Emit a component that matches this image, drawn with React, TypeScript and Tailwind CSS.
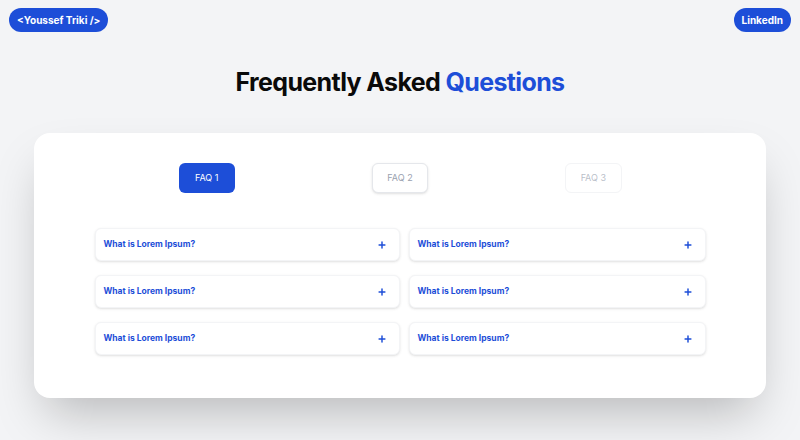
import { Plus } from 'lucide-react'

const tabs = ['FAQ 1', 'FAQ 2', 'FAQ 3']
const questions = Array.from({ length: 6 }, () => 'What is Lorem Ipsum?')

export default function App() {
  return (
    <div className="min-h-[440px] bg-gray-100 font-['Inter',sans-serif] text-gray-900">
      {/* Top bar */}
      <header className="flex items-center justify-between px-[9px] pt-2">
        <a className="rounded-full bg-[#1d4ed8] px-2 py-1 text-[10px] leading-4 font-bold text-white">
          &lt;Youssef Triki /&gt;
        </a>
        <a className="rounded-full bg-[#1d4ed8] px-2 py-1 text-[10px] leading-4 font-bold text-white">
          LinkedIn
        </a>
      </header>

      <h1 className="mt-[34px] text-center text-[25px] leading-8 font-bold tracking-tight text-[#0a0a0a]">
        Frequently Asked <span className="text-[#1d4ed8]">Questions</span>
      </h1>

      {/* Card */}
      <div className="mx-[34px] mt-[35px] rounded-2xl bg-white pt-[30px] pb-[43px] shadow-2xl">
        <div className="mx-auto grid w-[580px] grid-cols-3 justify-items-center">
          {tabs.map((t, i) => (
            <button
              key={t}
              className={
                i === 0
                  ? 'h-[30px] w-[56px] rounded-md bg-[#1d4ed8] text-[9px] text-white'
                  : i === 1
                    ? 'h-[30px] w-[56px] rounded-md border border-gray-200 bg-white text-[9px] text-gray-400 shadow-sm'
                    : 'h-[30px] w-[57px] rounded-md border border-gray-100 bg-white text-[9px] text-gray-400/70'
              }
            >
              {t}
            </button>
          ))}
        </div>

        <div className="mx-auto mt-[35px] grid w-[611px] grid-cols-[305px_297px] gap-x-[9px] gap-y-[14px]">
          {questions.map((q, i) => (
            <div
              key={i}
              className="flex h-[33px] items-center justify-between rounded-md border border-gray-100 bg-white pr-[12px] pl-2 shadow-sm"
            >
              <span className="text-[8.5px] font-bold text-[#1d4ed8]">{q}</span>
              <Plus className="h-[10px] w-[10px] text-[#1d4ed8]" strokeWidth={3.5} />
            </div>
          ))}
        </div>
      </div>
    </div>
  )
}
